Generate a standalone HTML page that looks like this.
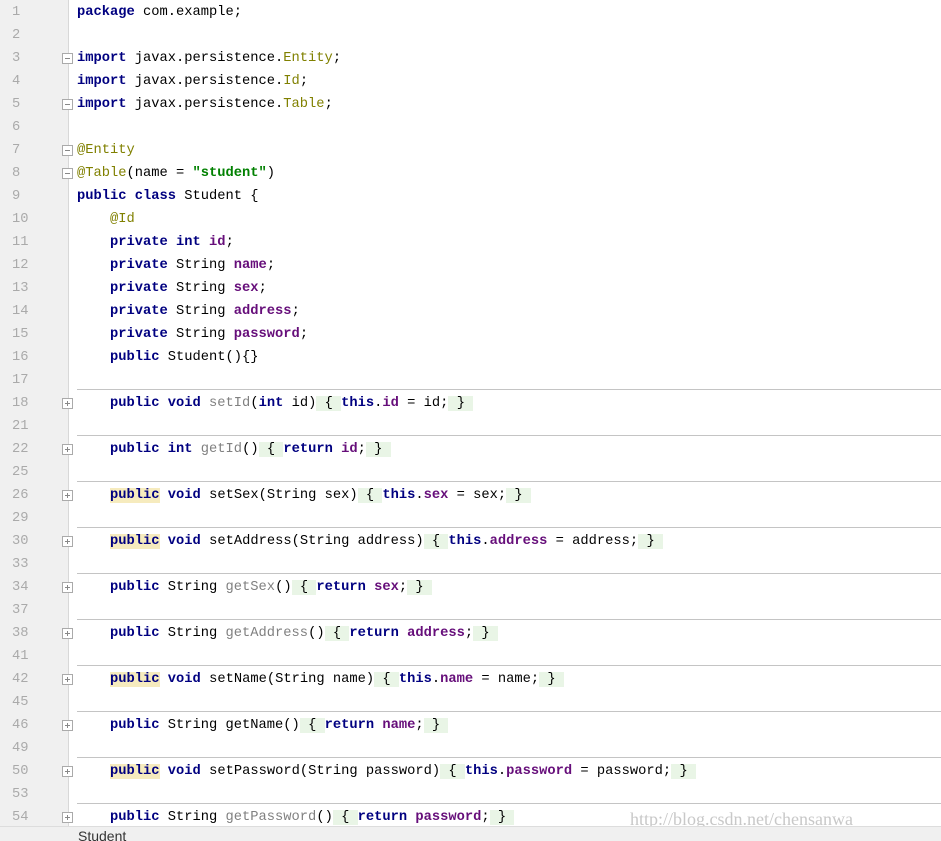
<!DOCTYPE html>
<html><head><meta charset="utf-8"><style>
html,body{margin:0;padding:0;width:941px;height:841px;overflow:hidden;background:#fff;}
body{font-family:"Liberation Mono","Noto Sans CJK SC",monospace;font-size:13.75px;position:relative;}
#gut{position:absolute;left:0;top:0;width:68px;height:841px;background:#f0f0f0;border-right:1px solid #d8d8d8;}
#w{position:absolute;left:0;top:1px;width:941px;}
.r{position:absolute;left:0;height:23px;line-height:23px;width:941px;white-space:pre;}
.n{position:absolute;left:12px;color:#aaa;width:30px;}
.c{position:absolute;left:77px;color:#000;}
.sep{position:absolute;left:77px;right:0;top:-3px;border-top:1px solid #c4c4c4;}
.k{color:#000080;font-weight:bold;}
.a{color:#808000;}
.f{color:#660e7a;font-weight:bold;}
.s{color:#008000;font-weight:bold;}
.g{color:#808080;}
.b{background:#e9f5e6;}
.y{background:#f6ebbe;}
.p{position:absolute;left:62px;top:6px;width:9px;height:9px;border:1px solid #aaa;background:#fff;}
.p:before{content:"";position:absolute;left:2px;top:4px;width:5px;height:1px;background:#888;}
.p.pl:after{content:"";position:absolute;left:4px;top:2px;width:1px;height:5px;background:#888;}
#st{position:absolute;left:0;top:826px;width:941px;height:15px;background:#f0f0f0;border-top:1px solid #ddd;}
#st span{position:absolute;left:78px;top:1px;font-family:"Liberation Sans",sans-serif;font-size:14px;color:#333;}
#wm{position:absolute;left:630px;top:809px;font-family:"Liberation Serif",serif;font-size:18px;color:#c8c8c8;}
</style></head><body>
<div id="gut"></div>
<div id="w">
<div class="r" style="top:0"><span class="n">1</span><span class="c"><span class="k">package</span> com.example;</span></div>
<div class="r" style="top:23px"><span class="n">2</span></div>
<div class="r" style="top:46px"><span class="n">3</span><span class="p"></span><span class="c"><span class="k">import</span> javax.persistence.<span class="a">Entity</span>;</span></div>
<div class="r" style="top:69px"><span class="n">4</span><span class="c"><span class="k">import</span> javax.persistence.<span class="a">Id</span>;</span></div>
<div class="r" style="top:92px"><span class="n">5</span><span class="p"></span><span class="c"><span class="k">import</span> javax.persistence.<span class="a">Table</span>;</span></div>
<div class="r" style="top:115px"><span class="n">6</span></div>
<div class="r" style="top:138px"><span class="n">7</span><span class="p"></span><span class="c"><span class="a">@Entity</span></span></div>
<div class="r" style="top:161px"><span class="n">8</span><span class="p"></span><span class="c"><span class="a">@Table</span>(name = <span class="s">"student"</span>)</span></div>
<div class="r" style="top:184px"><span class="n">9</span><span class="c"><span class="k">public class</span> Student {</span></div>
<div class="r" style="top:207px"><span class="n">10</span><span class="c">    <span class="a">@Id</span></span></div>
<div class="r" style="top:230px"><span class="n">11</span><span class="c">    <span class="k">private int</span> <span class="f">id</span>;</span></div>
<div class="r" style="top:253px"><span class="n">12</span><span class="c">    <span class="k">private</span> String <span class="f">name</span>;</span></div>
<div class="r" style="top:276px"><span class="n">13</span><span class="c">    <span class="k">private</span> String <span class="f">sex</span>;</span></div>
<div class="r" style="top:299px"><span class="n">14</span><span class="c">    <span class="k">private</span> String <span class="f">address</span>;</span></div>
<div class="r" style="top:322px"><span class="n">15</span><span class="c">    <span class="k">private</span> String <span class="f">password</span>;</span></div>
<div class="r" style="top:345px"><span class="n">16</span><span class="c">    <span class="k">public</span> Student(){}</span></div>
<div class="r" style="top:368px"><span class="n">17</span></div>

<div class="r" style="top:391px"><span class="sep"></span><span class="n">18</span><span class="p pl"></span><span class="c">    <span class="k">public void</span> <span class="g">setId</span>(<span class="k">int</span> id)<span class="b"> { </span><span class="k">this</span>.<span class="f">id</span> = id;<span class="b"> } </span></span></div>
<div class="r" style="top:414px"><span class="n">21</span></div>
<div class="r" style="top:437px"><span class="sep"></span><span class="n">22</span><span class="p pl"></span><span class="c">    <span class="k">public int</span> <span class="g">getId</span>()<span class="b"> { </span><span class="k">return</span> <span class="f">id</span>;<span class="b"> } </span></span></div>
<div class="r" style="top:460px"><span class="n">25</span></div>
<div class="r" style="top:483px"><span class="sep"></span><span class="n">26</span><span class="p pl"></span><span class="c">    <span class="k y">public</span> <span class="k">void</span> setSex(String sex)<span class="b"> { </span><span class="k">this</span>.<span class="f">sex</span> = sex;<span class="b"> } </span></span></div>
<div class="r" style="top:506px"><span class="n">29</span></div>
<div class="r" style="top:529px"><span class="sep"></span><span class="n">30</span><span class="p pl"></span><span class="c">    <span class="k y">public</span> <span class="k">void</span> setAddress(String address)<span class="b"> { </span><span class="k">this</span>.<span class="f">address</span> = address;<span class="b"> } </span></span></div>
<div class="r" style="top:552px"><span class="n">33</span></div>
<div class="r" style="top:575px"><span class="sep"></span><span class="n">34</span><span class="p pl"></span><span class="c">    <span class="k">public</span> String <span class="g">getSex</span>()<span class="b"> { </span><span class="k">return</span> <span class="f">sex</span>;<span class="b"> } </span></span></div>
<div class="r" style="top:598px"><span class="n">37</span></div>
<div class="r" style="top:621px"><span class="sep"></span><span class="n">38</span><span class="p pl"></span><span class="c">    <span class="k">public</span> String <span class="g">getAddress</span>()<span class="b"> { </span><span class="k">return</span> <span class="f">address</span>;<span class="b"> } </span></span></div>
<div class="r" style="top:644px"><span class="n">41</span></div>
<div class="r" style="top:667px"><span class="sep"></span><span class="n">42</span><span class="p pl"></span><span class="c">    <span class="k y">public</span> <span class="k">void</span> setName(String name)<span class="b"> { </span><span class="k">this</span>.<span class="f">name</span> = name;<span class="b"> } </span></span></div>
<div class="r" style="top:690px"><span class="n">45</span></div>
<div class="r" style="top:713px"><span class="sep"></span><span class="n">46</span><span class="p pl"></span><span class="c">    <span class="k">public</span> String getName()<span class="b"> { </span><span class="k">return</span> <span class="f">name</span>;<span class="b"> } </span></span></div>
<div class="r" style="top:736px"><span class="n">49</span></div>
<div class="r" style="top:759px"><span class="sep"></span><span class="n">50</span><span class="p pl"></span><span class="c">    <span class="k y">public</span> <span class="k">void</span> setPassword(String password)<span class="b"> { </span><span class="k">this</span>.<span class="f">password</span> = password;<span class="b"> } </span></span></div>
<div class="r" style="top:782px"><span class="n">53</span></div>
<div class="r" style="top:805px"><span class="sep"></span><span class="n">54</span><span class="p pl"></span><span class="c">    <span class="k">public</span> String <span class="g">getPassword</span>()<span class="b"> { </span><span class="k">return</span> <span class="f">password</span>;<span class="b"> } </span></span></div>
</div>
<div id="wm">http://blog.csdn.net/chensanwa</div>
<div id="st"><span>Student</span></div>
</body></html>
